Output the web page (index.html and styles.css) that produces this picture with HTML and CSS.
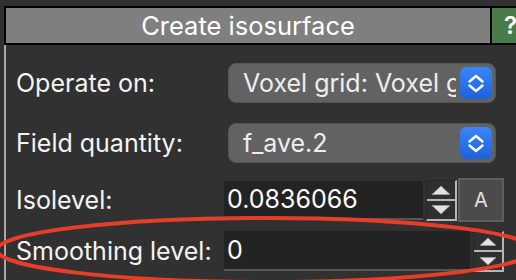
FILE: index.html
```html
<!DOCTYPE html>
<html>
<head>
<meta charset="utf-8">
<link rel="stylesheet" href="styles.css">
</head>
<body>
<div class="page">
  <div class="titlebar">
    <div class="title">Create isosurface</div>
    <div class="help">?</div>
  </div>
  <div class="panel">
    <div class="row r1">
      <div class="label">Operate on:</div>
      <div class="combo">
        <span class="combo-text">Voxel grid: Voxel grid</span>
        <span class="combo-btn"><svg viewBox="0 0 32 32" width="32" height="32"><path d="M9.5 14.5 L16 9 L22.5 14.5 M9.5 18.5 L16 24 L22.5 18.5" fill="none" stroke="#fff" stroke-width="2.4" stroke-linecap="round" stroke-linejoin="round"/></svg></span>
      </div>
    </div>
    <div class="row r2">
      <div class="label">Field quantity:</div>
      <div class="combo">
        <span class="combo-text">f_ave.2</span>
        <span class="combo-btn"><svg viewBox="0 0 32 32" width="32" height="32"><path d="M9.5 14.5 L16 9 L22.5 14.5 M9.5 18.5 L16 24 L22.5 18.5" fill="none" stroke="#fff" stroke-width="2.4" stroke-linecap="round" stroke-linejoin="round"/></svg></span>
      </div>
    </div>
    <div class="row r3">
      <div class="label">Isolevel:</div>
      <div class="field iso">0.0836066</div>
      <div class="spin s3">
        <div class="spin-half"><svg viewBox="0 0 20 10" width="20" height="10"><polygon points="1,9.5 10,1 19,9.5" fill="#e2e2e2" stroke="#9a9a9a" stroke-width="0.8"/></svg></div>
        <div class="spin-half down"><svg viewBox="0 0 20 10" width="20" height="10"><polygon points="1,0.5 10,9 19,0.5" fill="#e2e2e2" stroke="#9a9a9a" stroke-width="0.8"/></svg></div>
      </div>
      <div class="abtn">A</div>
    </div>
    <div class="row r4">
      <div class="label">Smoothing level:</div>
      <div class="field smooth">0</div>
      <div class="spin s4">
        <div class="spin-half"><svg viewBox="0 0 20 10" width="18" height="9"><polygon points="1,9.5 10,1 19,9.5" fill="#e2e2e2" stroke="#9a9a9a" stroke-width="0.8"/></svg></div>
        <div class="spin-half down"><svg viewBox="0 0 20 10" width="18" height="9"><polygon points="1,0.5 10,9 19,0.5" fill="#e2e2e2" stroke="#9a9a9a" stroke-width="0.8"/></svg></div>
      </div>
    </div>
  </div>
</div>
<svg class="annot" width="516" height="280" viewBox="0 0 516 280"><ellipse cx="265" cy="250" rx="268" ry="32" fill="none" stroke="#e63e28" stroke-width="4"/></svg>
</body>
</html>
```
FILE: styles.css
```css
html, body {
  margin: 0;
  padding: 0;
  background: #313131;
  overflow: hidden;
  width: 516px;
  height: 280px;
}
body {
  position: relative;
  font-family: Inter, "Noto Sans", "Liberation Sans", sans-serif;
  color: #f2f2f2;
}
.page {
  padding: 6px 0 0 4px;
}
.titlebar {
  display: flex;
  height: 35px;
  border-top: 2px solid #000;
  border-bottom: 2px solid #000;
  border-left: 2px solid #000;
  width: 510px;
  overflow: hidden;
}
.title {
  width: 484px;
  flex: none;
  background: #7f7f7f;
  color: #fff;
  font-size: 25.5px;
  line-height: 35px;
  text-align: center;
  border-right: 2px solid #000;
}
.help {
  flex: 1;
  background: #4a7c4a;
  color: #fff;
  font-size: 24px;
  font-weight: 600;
  line-height: 35px;
  padding-left: 12px;
}
.panel {
  border-left: 2px solid #a9a9a9;
  padding: 18px 0 20px 10px;
  display: flex;
  flex-direction: column;
}
.row {
  display: flex;
  align-items: center;
}
.r1 { height: 40px; }
.r2 { height: 40px; margin-top: 20px; }
.r3 { height: 44px; margin-top: 15px; }
.r4 { height: 40px; margin-top: 9px; }
.label {
  width: 208px;
  flex: none;
  font-size: 25px;
  color: #f4f4f4;
}
.combo {
  margin-left: 4px;
  width: 268px;
  height: 40px;
  box-sizing: border-box;
  background: #626262;
  border: 1px solid #555;
  border-radius: 8px;
  display: flex;
  align-items: center;
  padding: 0 3px 0 14px;
}
.combo-text {
  flex: 1;
  overflow: hidden;
  white-space: nowrap;
  font-size: 25px;
  color: #eeeeee;
}
.combo-btn {
  flex: none;
  width: 32px;
  height: 32px;
  border-radius: 6px;
  background: linear-gradient(#3a86f8, #1b62dc);
  margin-left: 4px;
  display: block;
}
.combo-btn svg { display: block; }
.field {
  background: #232323;
  border-bottom: 2px solid #575757;
  box-sizing: border-box;
  font-size: 25px;
  color: #fff;
  padding-left: 3px;
  display: flex;
  align-items: center;
}
.iso {
  width: 199px;
  height: 39px;
}
.smooth {
  width: 246px;
  height: 40px;
}
.spin {
  display: flex;
  flex-direction: column;
  box-sizing: border-box;
  border-right: 2px solid #b5b5b5;
  border-bottom: 2px solid #b5b5b5;
  border-top: 1px solid #262626;
  border-left: 1px solid #262626;
}
.s3 {
  margin-left: 3px;
  width: 31px;
  height: 41px;
}
.s4 {
  margin-left: 3px;
  width: 31px;
  height: 41px;
  align-self: flex-start;
}
.spin-half {
  flex: 1;
  display: flex;
  align-items: center;
  justify-content: center;
  background: #2f2f2f;
}
.spin-half.down {
  border-top: 2px solid #b5b5b5;
}
.spin-half svg { display: block; }
.abtn {
  margin-left: 1px;
  width: 46px;
  height: 44px;
  box-sizing: border-box;
  background: #4b4b4b;
  border: 2px solid #5e5e5e;
  color: #e0e0e0;
  font-size: 20px;
  display: flex;
  align-items: center;
  justify-content: center;
}
.annot {
  position: absolute;
  left: 0;
  top: 0;
  pointer-events: none;
}
```
